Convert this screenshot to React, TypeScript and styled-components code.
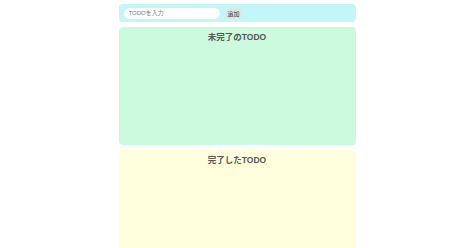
import React, { useState } from 'react'
import styled, { createGlobalStyle } from 'styled-components'

const GlobalStyle = createGlobalStyle`
    body {
        margin: 0;
        background: #ffffff;
        font-family: 'Liberation Sans', 'Noto Sans CJK JP', sans-serif;
    }
`

const Page = styled.div`
    width: 237px;
    margin: 4px auto 0;
    display: flex;
    flex-direction: column;
    gap: 5px;
`

const InputArea = styled.div`
    height: 18px;
    padding: 0 5px;
    background: #c3f6f8;
    border-radius: 4px;
    display: flex;
    align-items: center;
    gap: 5px;
`

const TodoInput = styled.input`
    width: 96px;
    height: 11px;
    box-sizing: border-box;
    padding: 0 5px;
    border: none;
    border-radius: 6px;
    outline: none;
    background: #ffffff;
    font-family: inherit;
    font-size: 6px;
    color: #333;

    &::placeholder {
        color: #777;
    }
`

const AddButton = styled.button`
    height: 11px;
    padding: 0 3px;
    border: none;
    border-radius: 6px;
    background: #d9e9e9;
    font-family: inherit;
    font-size: 6px;
    color: #333;
    cursor: pointer;
`

const Panel = styled.div<{ $bg: string }>`
    height: 118px;
    padding-top: 5px;
    box-sizing: border-box;
    background: ${(p) => p.$bg};
    border-radius: 4px;
`

const Title = styled.p`
    margin: 0;
    text-align: center;
    font-size: 8.5px;
    line-height: 10px;
    font-weight: bold;
    color: #555;
`

const List = styled.ul`
    margin: 0;
    padding: 0 10px;
    list-style: none;
`

export default function App() {
    const [text, setText] = useState('')
    const [incomplete, setIncomplete] = useState<string[]>([])
    const [complete] = useState<string[]>([])

    const onAdd = () => {
        if (!text) return
        setIncomplete([...incomplete, text])
        setText('')
    }

    return (
        <>
            <GlobalStyle />
            <Page>
                <InputArea>
                    <TodoInput
                        placeholder="TODOを入力"
                        value={text}
                        onChange={(e) => setText(e.target.value)}
                    />
                    <AddButton onClick={onAdd}>追加</AddButton>
                </InputArea>

                <Panel $bg="#ccfade">
                    <Title>未完了のTODO</Title>
                    <List>
                        {incomplete.map((t, i) => (
                            <li key={i}>{t}</li>
                        ))}
                    </List>
                </Panel>

                <Panel $bg="#fefedc">
                    <Title>完了したTODO</Title>
                    <List>
                        {complete.map((t, i) => (
                            <li key={i}>{t}</li>
                        ))}
                    </List>
                </Panel>
            </Page>
        </>
    )
}
